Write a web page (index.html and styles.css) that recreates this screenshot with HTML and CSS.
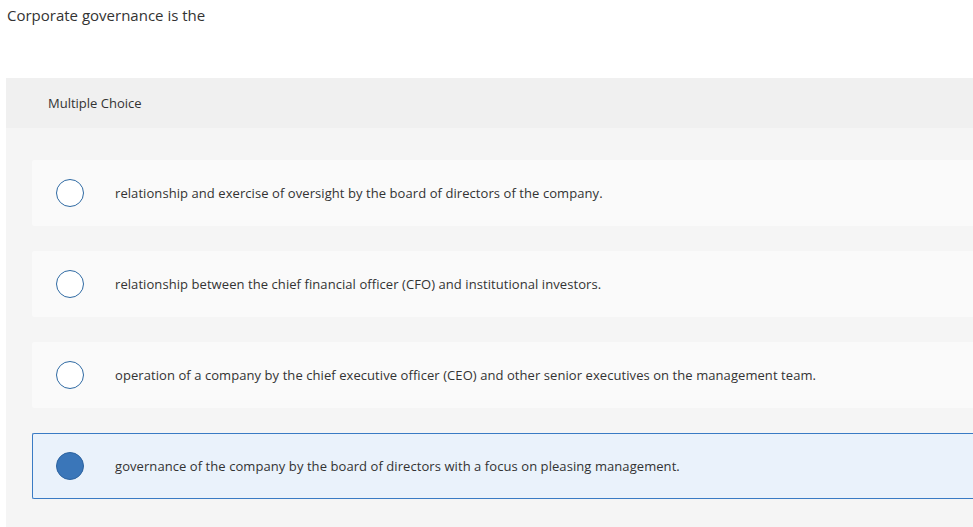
FILE: index.html
```html
<!DOCTYPE html>
<html>
<head>
<meta charset="utf-8">
<link rel="stylesheet" href="styles.css">
</head>
<body>
<p class="question">Corporate governance is the</p>
<section class="panel">
  <div class="panel-head">Multiple Choice</div>
  <div class="options">
    <label class="option"><span class="radio"></span><span class="opt-text">relationship and exercise of oversight by the board of directors of the company.</span></label>
    <label class="option"><span class="radio"></span><span class="opt-text">relationship between the chief financial officer (CFO) and institutional investors.</span></label>
    <label class="option"><span class="radio"></span><span class="opt-text">operation of a company by the chief executive officer (CEO) and other senior executives on the management team.</span></label>
    <label class="option selected"><span class="radio"></span><span class="opt-text">governance of the company by the board of directors with a focus on pleasing management.</span></label>
  </div>
</section>
</body>
</html>
```
FILE: styles.css
```css
html, body {
  margin: 0;
  padding: 0;
  background: #ffffff;
  overflow: hidden;
  font-family: "Open Sans", "Liberation Sans", Arial, sans-serif;
  color: #333333;
}
.question {
  margin: 0;
  padding: 5px 0 0 7px;
  font-size: 15px;
  line-height: 20px;
  height: 78px;
  box-sizing: border-box;
}
.panel {
  margin-left: 6px;
  width: 1000px;
  background: #f5f5f5;
  padding-bottom: 40px;
}
.panel-head {
  background: #f0f0f0;
  height: 50px;
  box-sizing: border-box;
  padding-left: 42px;
  display: flex;
  align-items: center;
  font-size: 13px;
}
.options {
  padding: 32px 0 0 26px;
  display: flex;
  flex-direction: column;
  gap: 25px;
}
.option {
  display: flex;
  align-items: center;
  height: 66px;
  box-sizing: border-box;
  background: #fafafa;
  border: 1px solid transparent;
  border-right: none;
  border-radius: 2px 0 0 2px;
  padding-left: 23px;
}
.radio {
  width: 28px;
  height: 28px;
  box-sizing: border-box;
  border: 1.5px solid #2f6aa3;
  border-radius: 50%;
  background: #ffffff;
  flex: none;
}
.opt-text {
  margin-left: 31px;
  font-size: 13px;
  letter-spacing: 0.07px;
}
.option.selected {
  background: #eaf2fb;
  border-color: #3a7bc4;
}
.option.selected .radio {
  background: #3a76b9;
  border-color: #2c63a0;
}
```
